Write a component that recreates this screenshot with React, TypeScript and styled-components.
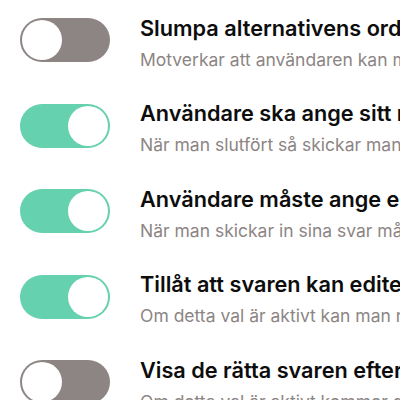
import React, { useState } from "react";
import styled, { createGlobalStyle } from "styled-components";

const Global = createGlobalStyle`
  html, body { margin: 0; padding: 0; background: #ffffff; }
  body { font-family: Inter, "Noto Sans", sans-serif; overflow: hidden; }
`;

const List = styled.div`
  display: flex;
  flex-direction: column;
  gap: 41.5px;
  padding: 18px 0 0 20px;
  width: 400px;
  box-sizing: border-box;
  overflow: hidden;
`;

const Row = styled.div`
  display: flex;
  align-items: center;
  gap: 30px;
  height: 44px;
`;

const Track = styled.button<{ $on: boolean }>`
  flex: 0 0 auto;
  width: 90px;
  height: 44px;
  border: none;
  padding: 2px;
  border-radius: 22px;
  background: ${(p) => (p.$on ? "#66d1ae" : "#8c8584")};
  display: flex;
  justify-content: ${(p) => (p.$on ? "flex-end" : "flex-start")};
  cursor: pointer;
  box-sizing: border-box;
`;

const Knob = styled.span`
  width: 40px;
  height: 40px;
  border-radius: 50%;
  background: #ffffff;
`;

const Texts = styled.div`
  display: flex;
  flex-direction: column;
  gap: 9px;
  min-width: 0;
  white-space: nowrap;
  margin-top: 4px;
`;

const Title = styled.div`
  font-size: 21.7px;
  font-weight: 600;
  color: #0d0d0d;
  line-height: 26px;
`;

const Sub = styled.div`
  font-size: 17.5px;
  color: #8c8584;
  line-height: 20px;
`;

const items = [
  { on: false, t: "Slumpa alternativens ordning", s: "Motverkar att användaren kan memorera svaren" },
  { on: true, t: "Användare ska ange sitt namn", s: "När man slutfört så skickar man in sitt namn" },
  { on: true, t: "Användare måste ange en e-post", s: "När man skickar in sina svar måste man ange e-post" },
  { on: true, t: "Tillåt att svaren kan editeras", s: "Om detta val är aktivt kan man redigera svaren" },
  { on: false, t: "Visa de rätta svaren efteråt", s: "Om detta val är aktivt kommer de rätta svaren visas" },
];

export default function App() {
  const [state, setState] = useState(items.map((i) => i.on));
  return (
    <>
      <Global />
      <List>
        {items.map((it, i) => (
          <Row key={i}>
            <Track
              $on={state[i]}
              onClick={() => setState(state.map((v, j) => (j === i ? !v : v)))}
            >
              <Knob />
            </Track>
            <Texts>
              <Title>{it.t}</Title>
              <Sub>{it.s}</Sub>
            </Texts>
          </Row>
        ))}
      </List>
    </>
  );
}
